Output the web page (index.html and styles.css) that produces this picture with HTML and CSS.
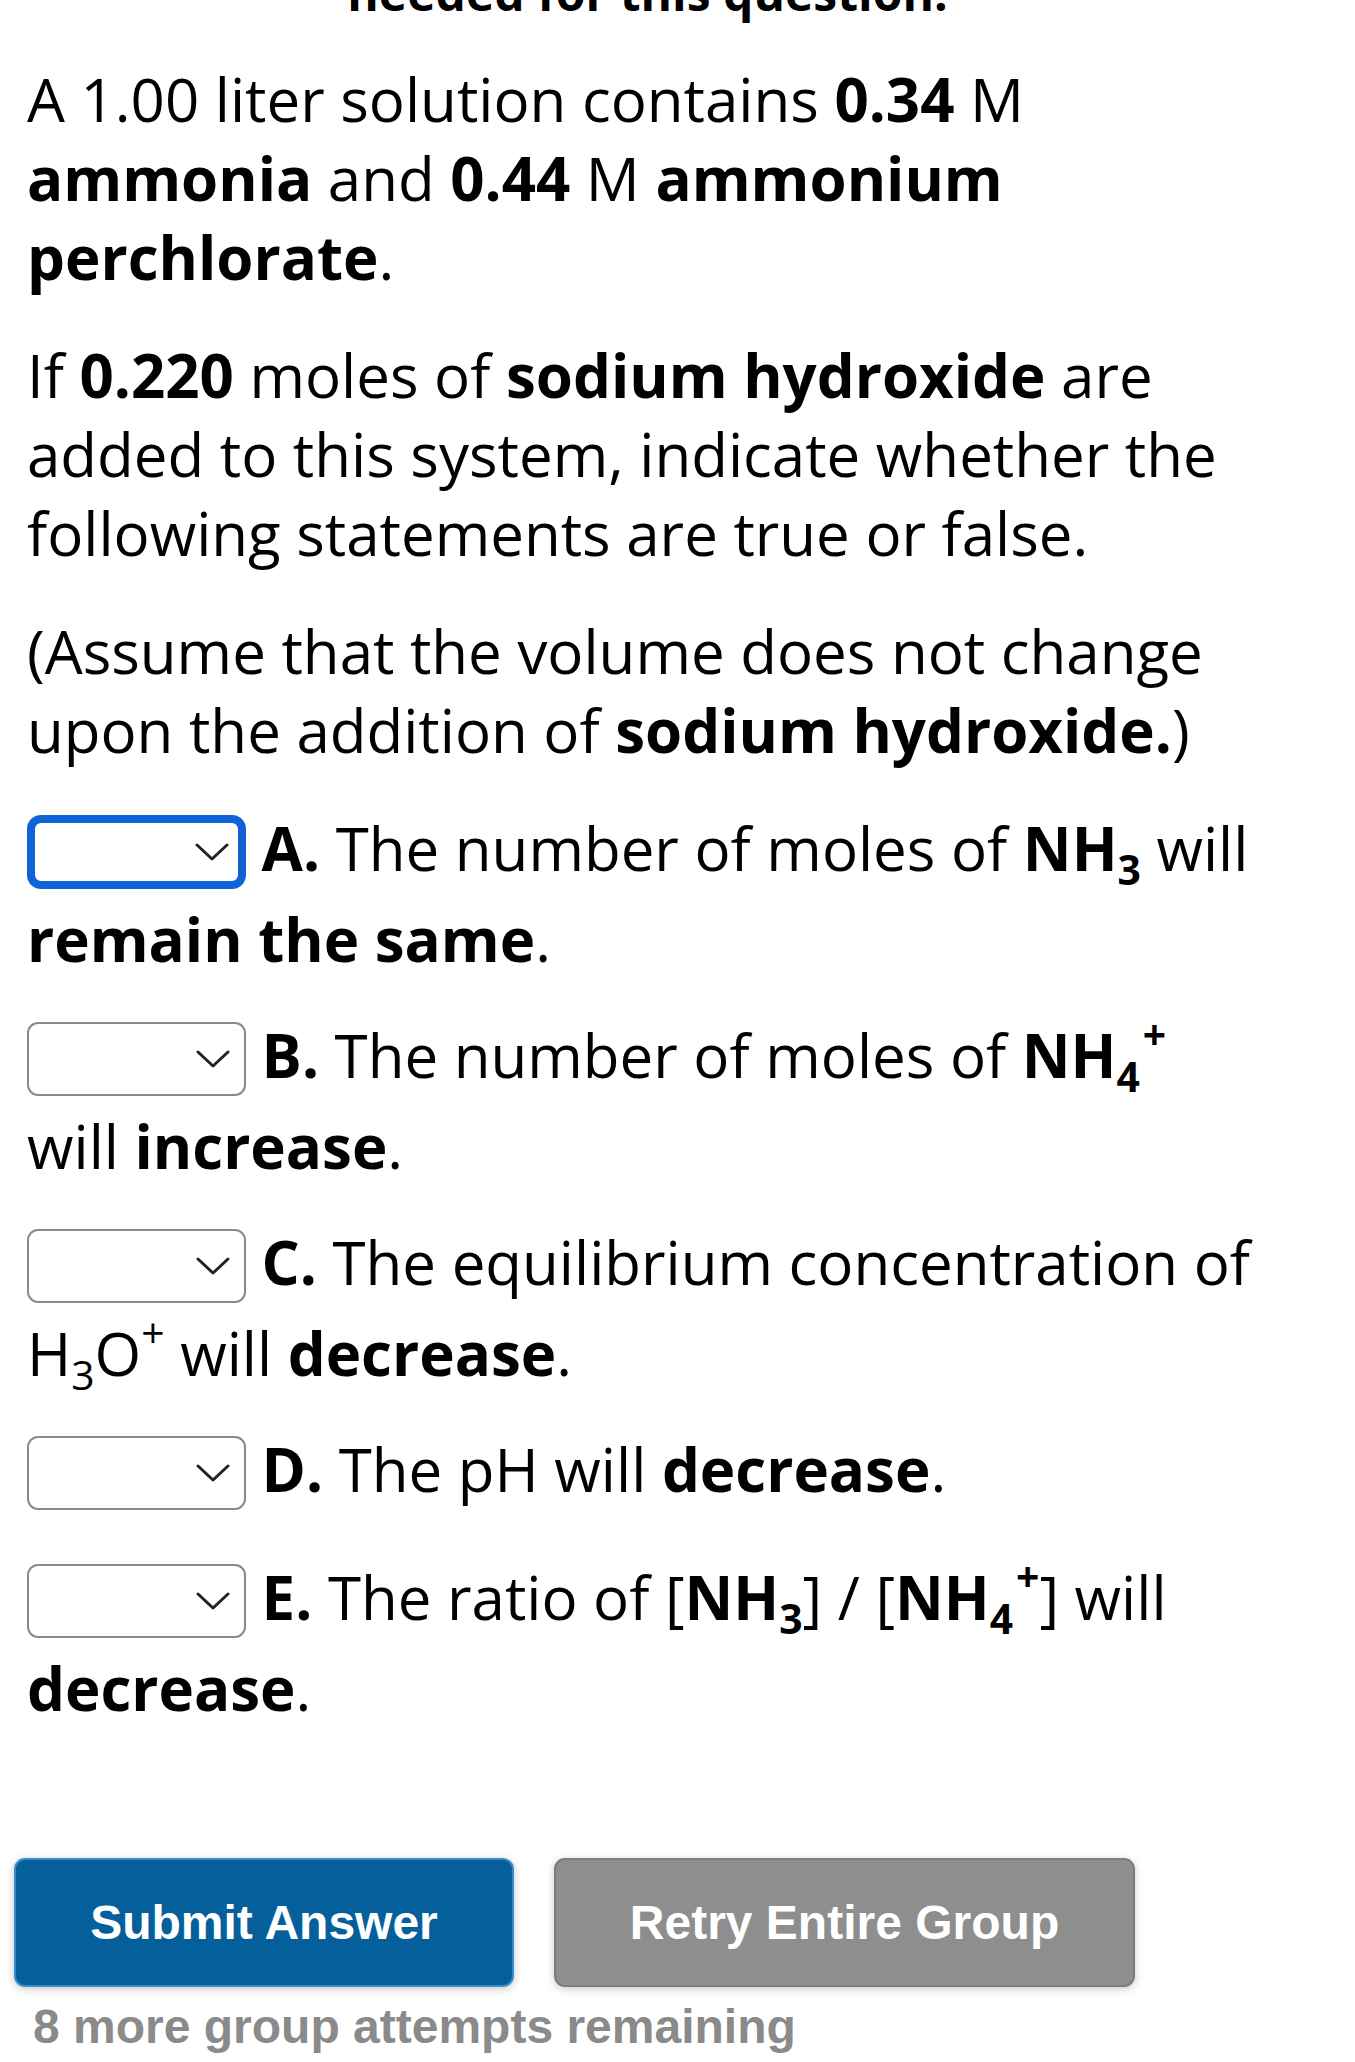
FILE: index.html
```html
<!DOCTYPE html>
<html lang="en">
<head>
<meta charset="utf-8">
<title>Buffer question</title>
<link rel="stylesheet" href="styles.css">
</head>
<body>
<main class="content">
  <p class="lead-tail">needed for this question.</p>

  <p class="q">A 1.00 liter solution contains <b>0.34</b> M <b>ammonia</b> and <b>0.44</b> M <b>ammonium perchlorate</b>.</p>

  <p class="q">If <b>0.220</b> moles of <b>sodium hydroxide</b> are added to this system, indicate whether the following statements are true or false.</p>

  <p class="q">(Assume that the volume does not change upon the addition of <b>sodium hydroxide.</b>)</p>

  <p class="q item"><span class="dd dd-focus"><span class="dd-inner"><svg class="chev" viewBox="0 0 34 18" width="34" height="18"><path d="M2 2 L17 16 L32 2"/></svg></span></span> <b>A.</b> The number of moles of <b>NH<sub>3</sub></b> will <b>remain the same</b>.</p>

  <p class="q item"><span class="dd"><span class="dd-inner"><svg class="chev" viewBox="0 0 34 18" width="34" height="18"><path d="M2 2 L17 16 L32 2"/></svg></span></span> <b>B.</b> The number of moles of <b>NH<sub>4</sub><sup class="ion">+</sup></b> will <b>increase</b>.</p>

  <p class="q item"><span class="dd"><span class="dd-inner"><svg class="chev" viewBox="0 0 34 18" width="34" height="18"><path d="M2 2 L17 16 L32 2"/></svg></span></span> <b>C.</b> The equilibrium concentration of H<sub>3</sub>O<sup>+</sup> will <b>decrease</b>.</p>

  <p class="q item"><span class="dd"><span class="dd-inner"><svg class="chev" viewBox="0 0 34 18" width="34" height="18"><path d="M2 2 L17 16 L32 2"/></svg></span></span> <b>D.</b> The pH will <b>decrease</b>.</p>

  <p class="q item"><span class="dd"><span class="dd-inner"><svg class="chev" viewBox="0 0 34 18" width="34" height="18"><path d="M2 2 L17 16 L32 2"/></svg></span></span> <b>E.</b> The ratio of [<b>NH<sub>3</sub></b>] / [<b>NH<sub>4</sub><sup class="ion">+</sup></b>] will <b>decrease</b>.</p>
</main>

<div class="actions">
  <button class="btn btn-primary" type="button">Submit Answer</button>
  <button class="btn btn-secondary" type="button">Retry Entire Group</button>
</div>
<p class="attempts">8 more group attempts remaining</p>
</body>
</html>
```

FILE: styles.css
```css
html, body {
  margin: 0;
  padding: 0;
  background: #ffffff;
}

body {
  font-family: "Open Sans", "Noto Sans", sans-serif;
  color: #000000;
  overflow: hidden;
}

.content {
  width: 1241px;
  padding-left: 27px;
}

.lead-tail {
  margin: -31px 0 43px;
  font-size: 48px;
  line-height: 48px;
  font-weight: 700;
  text-align: center;
  white-space: nowrap;
}

.q {
  margin: 0 0 39px;
  font-size: 60px;
  line-height: 79px;
}

.q.item {
  margin-bottom: 37px;
}

.q b {
  font-weight: 700;
}

sub, sup {
  font-size: 0.68em;
  line-height: 0;
}

sub {
  vertical-align: -0.35em;
}

sup {
  vertical-align: 0.68em;
}

sup.ion {
  margin-left: 3px;
}

.dd {
  display: inline-block;
  box-sizing: border-box;
  width: 219px;
  height: 74px;
  border: 2.5px solid #8a8a8a;
  border-radius: 11px;
  background: #ffffff;
  vertical-align: -29px;
  margin-bottom: 11px;
  overflow: hidden;
}

.dd-focus {
  border: 8px solid #0f63d6;
  border-radius: 14px;
}

.dd-inner {
  display: flex;
  height: 100%;
  align-items: center;
  justify-content: flex-end;
  padding-right: 14.5px;
}

.dd-focus .dd-inner {
  padding-right: 9px;
}

.chev {
  display: block;
}

.chev path {
  fill: none;
  stroke: #222222;
  stroke-width: 3;
  stroke-linecap: round;
  stroke-linejoin: round;
}

.actions {
  display: flex;
  gap: 40px;
  margin-top: 130px;
  padding-left: 14px;
}

.btn {
  box-sizing: border-box;
  height: 129px;
  padding: 0;
  border-radius: 11px;
  font-family: "Liberation Sans", Arial, sans-serif;
  font-weight: 700;
  font-size: 48px;
  color: #ffffff;
  white-space: nowrap;
  text-align: center;
  box-shadow: 0 2px 8px rgba(0, 0, 0, 0.22);
}

.btn-primary {
  width: 500px;
  background: #045f9b;
  border: 2px solid #3a8ccc;
}

.btn-secondary {
  width: 581px;
  background: #8e8e8e;
  border: 2px solid #7c7c7c;
}

.attempts {
  margin: 12px 0 0 33px;
  font-family: "Liberation Sans", Arial, sans-serif;
  font-weight: 700;
  font-size: 48px;
  line-height: 56px;
  color: #8a8a8a;
  white-space: nowrap;
}
```
